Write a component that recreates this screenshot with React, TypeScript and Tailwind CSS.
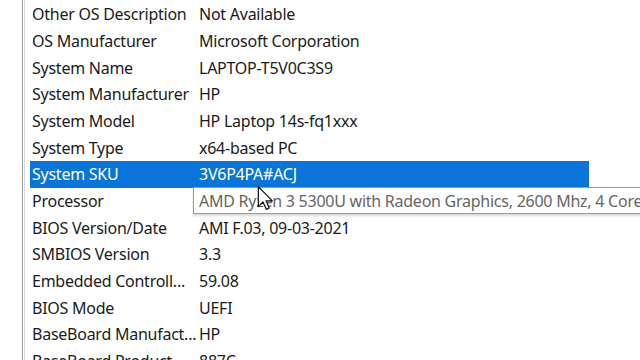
import React from "react"

const rows: [string, string][] = [
  ["Other OS Description", "Not Available"],
  ["OS Manufacturer", "Microsoft Corporation"],
  ["System Name", "LAPTOP-T5V0C3S9"],
  ["System Manufacturer", "HP"],
  ["System Model", "HP Laptop 14s-fq1xxx"],
  ["System Type", "x64-based PC"],
  ["System SKU", "3V6P4PA#ACJ"],
  ["Processor", ""],
  ["BIOS Version/Date", "AMI F.03, 09-03-2021"],
  ["SMBIOS Version", "3.3"],
  ["Embedded Controll...", "59.08"],
  ["BIOS Mode", "UEFI"],
  ["BaseBoard Manufact...", "HP"],
  ["BaseBoard Product", "887C"],
]

function Cursor() {
  return (
    <svg width="16" height="26" viewBox="0 0 12 19" className="absolute left-[257px] top-[185px]">
      <path
        d="M1 1 L1 16 L4.5 12.5 L7 18 L9.2 17 L6.8 11.6 L11.5 11.6 Z"
        fill="#fff"
        stroke="#111"
        strokeWidth="0.9"
        strokeLinejoin="round"
      />
    </svg>
  )
}

export default function App() {
  return (
    <div className="relative w-[640px] h-[360px] bg-white overflow-hidden flex font-['Noto_Sans','Open_Sans',sans-serif] text-[16px] tracking-[-0.25px] text-[#1b1b1b]">

      {/* left tree pane edge */}
      <div className="w-[22px] shrink-0" />
      <div className="w-[1px] bg-[#9a9a9a] shrink-0" />
      <div className="w-[1px] shrink-0" />
      <div className="w-[1px] bg-[#d9d9d9] shrink-0" />

      <div className="flex-1 pl-[5px] pt-[1px]">
        {rows.map(([k, v]) => {
          const sel = k === "System SKU"
          return (
            <div
              key={k}
              className={
                sel
                  ? "flex items-center h-[26.67px] w-[559px] bg-[#0a74d8] text-white leading-[22px]"
                  : "flex items-center h-[26.67px] leading-[22px]"
              }
            >
              <div className="w-[169px] shrink-0 pl-[2px] whitespace-nowrap">{k}</div>
              <div className="whitespace-nowrap">{v}</div>
            </div>
          )
        })}
      </div>

      {/* tooltip */}
      <div className="absolute left-[193px] top-[187px] w-[470px] h-[27px] bg-white border border-[#9b9b9b] shadow-[0_2px_2px_rgba(0,0,0,0.15)] flex items-center pl-[5px] text-[#666] whitespace-nowrap leading-[22px]">
        AMD Ryzen 3 5300U with Radeon Graphics, 2600 Mhz, 4 Core(s), 8 Logical Processor(s)
      </div>

      <Cursor />
    </div>
  )
}
